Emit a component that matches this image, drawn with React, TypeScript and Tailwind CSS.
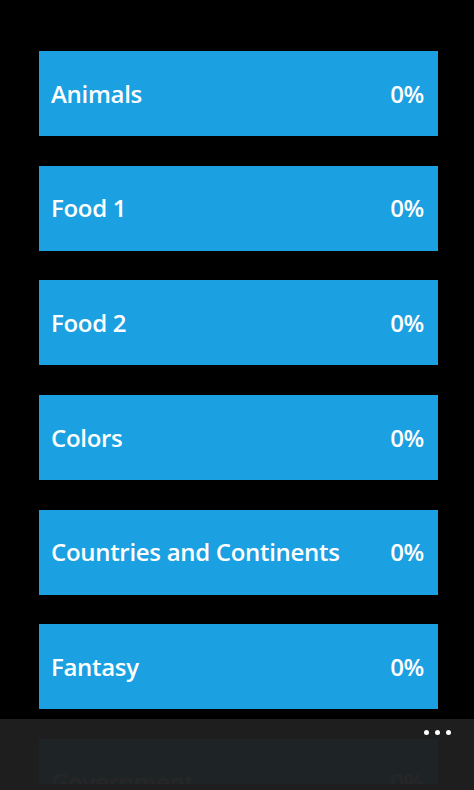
const categories = [
  "Animals",
  "Food 1",
  "Food 2",
  "Colors",
  "Countries and Continents",
  "Fantasy",
  "Government",
];

export default function App() {
  return (
    <div className="relative h-[790px] w-[474px] overflow-hidden bg-black font-['Open_Sans',sans-serif]">
      {/* Category list */}
      <div className="h-[784px] overflow-hidden pt-[51px]">
        <ul className="flex flex-col gap-[29.7px] px-[39px] pr-[36px]">
          {categories.map((name) => (
            <li
              key={name}
              className="flex h-[85px] items-center justify-between bg-[#1ba1e2] pl-[12px] pr-[14px] text-[24px] font-semibold tracking-[-0.3px] text-white"
            >
              <span>{name}</span>
              <span>0%</span>
            </li>
          ))}
        </ul>
      </div>

      {/* App bar */}
      <div className="absolute inset-x-0 bottom-0 h-[71px] bg-[#1f1f1f]/[0.97]">
        <div className="flex justify-end gap-[6px] pr-[23px] pt-[11px]">
          <span className="h-[5px] w-[5px] rounded-full bg-white" />
          <span className="h-[5px] w-[5px] rounded-full bg-white" />
          <span className="h-[5px] w-[5px] rounded-full bg-white" />
        </div>
      </div>
    </div>
  );
}
